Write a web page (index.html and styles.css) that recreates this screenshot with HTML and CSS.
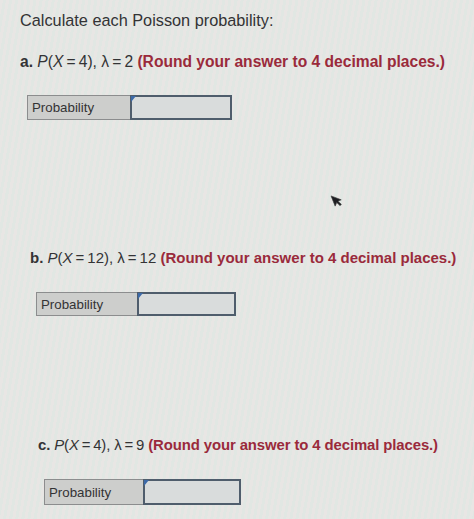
FILE: index.html
```html
<!DOCTYPE html>
<html lang="en">
  <head>
    <meta charset="UTF-8" />
    <meta name="viewport" content="width=device-width, initial-scale=1.0" />
    <title>Poisson probability</title>
    <link rel="stylesheet" href="styles.css">
  </head>
  <body>
    <div class="page">
      <h1 class="title">Calculate each Poisson probability:</h1>

      <section class="question question-a">
        <p class="prompt">
          <b class="letter">a.</b>
          <i>P</i>(<i>X</i>&thinsp;=&thinsp;4), λ&thinsp;=&thinsp;2
          <span class="hint">(Round your answer to 4 decimal places.)</span>
        </p>
        <div class="answer-row">
          <div class="answer-label">Probability</div>
          <div class="answer-input"><span class="flag"></span></div>
        </div>
      </section>

      <section class="question question-b">
        <p class="prompt">
          <b class="letter">b.</b>
          <i>P</i>(<i>X</i>&thinsp;=&thinsp;12), λ&thinsp;=&thinsp;12
          <span class="hint">(Round your answer to 4 decimal places.)</span>
        </p>
        <div class="answer-row">
          <div class="answer-label">Probability</div>
          <div class="answer-input"><span class="flag"></span></div>
        </div>
      </section>

      <section class="question question-c">
        <p class="prompt">
          <b class="letter">c.</b>
          <i>P</i>(<i>X</i>&thinsp;=&thinsp;4), λ&thinsp;=&thinsp;9
          <span class="hint">(Round your answer to 4 decimal places.)</span>
        </p>
        <div class="answer-row">
          <div class="answer-label">Probability</div>
          <div class="answer-input"><span class="flag"></span></div>
        </div>
      </section>

      <!-- mouse pointer -->
      <svg class="cursor" width="10" height="14" viewBox="0 0 10 14">
        <path d="M1 1 L1 12 L3.8 9.3 L5.8 13.4 L7.4 12.6 L5.4 8.6 L9 8.4 Z" fill="#1e1e22" stroke="#444" stroke-width="0.6" />
      </svg>
    </div>
  </body>
</html>
```

FILE: styles.css
```css
/* Reset */
* {
  margin: 0;
  padding: 0;
  box-sizing: border-box;
}

body {
  background-color: #e6e6e3;
  font-family: "Liberation Sans", Arial, sans-serif;
  color: #333335;
}

.page {
  position: relative;
  height: 519px;
  padding: 10px 0 0 20px;
  background: repeating-linear-gradient(100deg, #e8e6e4 0px, #e8e6e4 3px, #e1e7e3 3px, #e1e7e3 6px);
}

.title {
  font-size: 16.3px;
  font-weight: normal;
  line-height: 20px;
}

.prompt {
  font-size: 15.6px;
  line-height: 20px;
  white-space: nowrap;
}

.prompt .letter {
  color: #333335;
}

.prompt .hint {
  font-weight: bold;
  color: #9a2a3b;
}

/* slight shift of each block (photo perspective) */
.question-a {
  margin-top: 22px;
}

.question-b {
  margin-top: 128px;
  margin-left: 10px;
}

.question-b .prompt {
  font-size: 15px;
}

.question-c {
  margin-top: 119px;
  margin-left: 18px;
}

.question-c .prompt {
  font-size: 14.9px;
  letter-spacing: -0.1px;
}

.answer-row {
  display: flex;
  margin-top: 23px;
  margin-left: 7px;
  height: 25px;
  width: 205px;
}

.question-b .answer-row {
  margin-top: 24px;
  margin-left: 6px;
  width: 200px;
  height: 24px;
}

.question-c .answer-row {
  margin-top: 24px;
  margin-left: 6px;
  width: 197px;
  height: 26px;
}

.answer-label {
  flex: 1;
  display: flex;
  align-items: center;
  padding-left: 4px;
  font-size: 13.3px;
  color: #333335;
  background-color: #cdcecc;
  border: 1px solid #8c8d8e;
  border-right: none;
}

.answer-input {
  flex: 1;
  position: relative;
  background-color: #d9dcdc;
  border: 2px solid #4f5d6c;
}

.answer-input .flag {
  position: absolute;
  top: -1px;
  left: -1px;
  width: 0;
  height: 0;
  border-top: 6px solid #3d6aa8;
  border-right: 5px solid transparent;
}

.cursor {
  position: absolute;
  left: 332px;
  top: 193px;
  transform: rotate(-22deg);
}
```
